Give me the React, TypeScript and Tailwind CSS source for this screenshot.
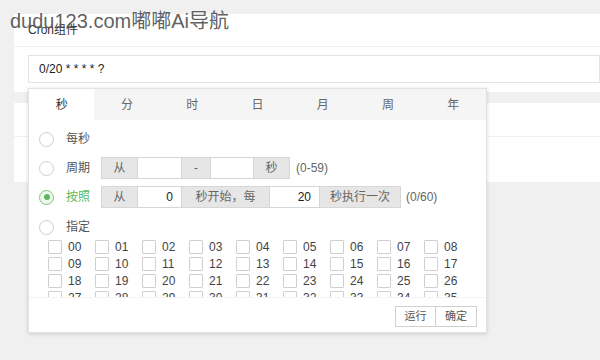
const TABS = ['秒', '分', '时', '日', '月', '周', '年'];
const SECONDS = Array.from({ length: 60 }, (_, i) => String(i).padStart(2, '0'));

// 单选框
const Radio = ({ checked = false }: { checked?: boolean }) =>
  checked ? (
    <span className="w-[15px] h-[15px] rounded-full border border-[#7cc47c] bg-[#eef8ee] flex items-center justify-center flex-shrink-0">
      <span className="w-[6px] h-[6px] rounded-full bg-[#5cb85c]" />
    </span>
  ) : (
    <span className="w-[15px] h-[15px] rounded-full border border-[#cfcfcf] bg-white flex-shrink-0" />
  );

const Addon = ({ w, children }: { w: string; children: React.ReactNode }) => (
  <span className={`${w} h-full flex items-center justify-center bg-[#e6e6e6] text-[#666] border-l border-[#d6d6d6] first:border-l-0`}>
    {children}
  </span>
);

const Field = ({ w, value = '' }: { w: string; value?: string }) => (
  <span className={`${w} h-full flex items-center justify-end pr-[8px] bg-white text-[#222] border-l border-[#d6d6d6]`}>
    {value}
  </span>
);

export default function App() {
  return (
    <div className="relative w-[600px] h-[360px] overflow-hidden bg-[#f0f0f0] font-['Liberation_Sans','Noto_Sans_CJK_SC',sans-serif] text-[12px] text-[#555]">
      {/* Page cards */}
      <div className="flex flex-col gap-[11px] pl-[14px] pt-[14px]">
        <div className="h-[78px] bg-white flex flex-col">
          <div className="h-[33px] flex items-center px-[14px] border-b border-[#f0f0f0] text-[#333]">Cron组件</div>
          <div className="pl-[14px] pt-[8px]">
            <div className="h-[28px] border border-[#e3e3e3] flex items-center pl-[10px] text-[#222]">0/20 * * * * ?</div>
          </div>
        </div>
        <div className="h-[79px] bg-white flex flex-col">
          <div className="h-[34px] border-b border-[#f0f0f0]" />
        </div>
      </div>

      {/* Cron popup */}
      <div className="absolute left-[28px] top-[88px] w-[459px] h-[245px] bg-white border border-[#e2e2e2] shadow-[0_1px_4px_rgba(0,0,0,0.15)] flex flex-col">
        <div className="h-[31px] grid grid-cols-7 bg-[#f5f5f5] flex-shrink-0">
          {TABS.map((t, i) => (
            <div key={t} className={`flex items-center justify-center ${i === 0 ? 'bg-white text-[#333]' : 'text-[#666]'}`}>
              {t}
            </div>
          ))}
        </div>

        <div className="h-[177px] overflow-hidden pt-[8px] flex-shrink-0">
          <div className="h-[22px] flex items-center pl-[10px] gap-[12px]">
            <Radio />
            <span>每秒</span>
          </div>
          <div className="mt-[7px] h-[22px] flex items-center pl-[10px]">
            <Radio />
            <span className="ml-[12px] w-[35px]">周期</span>
            <span className="h-[22px] flex border border-[#d6d6d6]">
              <Addon w="w-[35px]">从</Addon>
              <Field w="w-[44px]" />
              <Addon w="w-[29px]">-</Addon>
              <Field w="w-[43px]" />
              <Addon w="w-[36px]">秒</Addon>
            </span>
            <span className="ml-[6px] text-[#666]">(0-59)</span>
          </div>
          <div className="mt-[7px] h-[22px] flex items-center pl-[10px]">
            <Radio checked />
            <span className="ml-[12px] w-[35px] text-[#5cb85c]">按照</span>
            <span className="h-[22px] flex border border-[#d6d6d6]">
              <Addon w="w-[35px]">从</Addon>
              <Field w="w-[44px]" value="0" />
              <Addon w="w-[88px]">秒开始，每</Addon>
              <Field w="w-[50px]" value="20" />
              <Addon w="w-[81px]">秒执行一次</Addon>
            </span>
            <span className="ml-[5px] text-[#666]">(0/60)</span>
          </div>
          <div className="mt-[8px] h-[22px] flex items-center pl-[10px] gap-[12px]">
            <Radio />
            <span>指定</span>
          </div>
          <div className="pl-[19px] grid grid-cols-[repeat(9,47px)]">
            {SECONDS.map((s) => (
              <div key={s} className="h-[17px] flex items-center gap-[6px]">
                <span className="w-[14px] h-[14px] border border-[#d0d0d0] bg-white rounded-[1px]" />
                <span className="text-[#444]">{s}</span>
              </div>
            ))}
          </div>
        </div>

        {/* Footer */}
        <div className="flex-1 border-t border-[#f3f3f3] flex justify-end items-start pt-[8px] pr-[9px]">
          <button className="w-[41px] h-[21px] border border-[#d0d0d0] bg-white text-[11px] text-[#555]">运行</button>
          <button className="-ml-px w-[42px] h-[21px] border border-[#d0d0d0] bg-white text-[11px] text-[#555]">确定</button>
        </div>
      </div>

      {/* Watermark */}
      <div className="absolute left-[10px] top-[11px] leading-none text-[20px] text-[#4d4d4d]/90 whitespace-nowrap">
        dudu123.com嘟嘟Ai导航
      </div>
    </div>
  );
}
